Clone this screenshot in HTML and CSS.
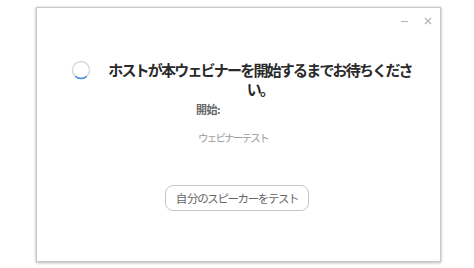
FILE: index.html
```html
<!DOCTYPE html>
<html lang="ja">
<head>
<meta charset="utf-8">
<link rel="stylesheet" href="styles.css">
</head>
<body>
<div class="window">
  <div class="titlebar">
    <span class="ctl min"></span>
    <span class="ctl close">
      <svg width="8" height="8" viewBox="0 0 8 8"><path d="M1 1L7 7M7 1L1 7" stroke="#b5b5b5" stroke-width="1.3"/></svg>
    </span>
  </div>
  <div class="heading">
    <svg class="spinner" width="20" height="20" viewBox="0 0 20 20">
      <circle cx="10" cy="10" r="8.5" fill="none" stroke="#d6d9de" stroke-width="1.5"/>
      <path d="M4.4 16.4 A8.5 8.5 0 0 0 15.6 16.4" fill="none" stroke="#4a8fdc" stroke-width="1.7"/>
    </svg>
    <h1 class="title">ホストが本ウェビナーを開始するまでお待ちくださ い。</h1>
  </div>
  <div class="info">
    <div class="label">開始:</div>
    <div class="name">ウェビナーテスト</div>
  </div>
  <div class="actions">
    <button class="btn">自&nbsp;分のスピーカーをテスト</button>
  </div>
</div>
</body>
</html>
```
FILE: styles.css
```css
html, body {
  margin: 0;
  padding: 0;
  background: #ffffff;
}
body {
  font-family: "Noto Sans CJK JP", "Noto Sans", sans-serif;
  width: 474px;
  height: 268px;
  overflow: hidden;
}
.window {
  box-sizing: border-box;
  margin: 7px 0 0 36px;
  width: 405px;
  height: 255px;
  background: #fff;
  border: 1px solid #c9c9c9;
  box-shadow: 0 1px 3px rgba(0,0,0,0.25), 0 0 1px rgba(0,0,0,0.2);
  display: flex;
  flex-direction: column;
}
.titlebar {
  display: flex;
  justify-content: flex-end;
  align-items: center;
  gap: 14px;
  height: 18px;
  padding: 0 8px 0 0;
  margin-top: 4px;
}
.ctl {
  display: flex;
  align-items: center;
  justify-content: center;
  width: 9px;
  height: 9px;
}
.min::before {
  content: "";
  display: block;
  width: 7px;
  height: 1px;
  background: #b5b5b5;
}
.heading {
  display: flex;
  align-items: flex-start;
  margin-top: 30px;
  padding-left: 34px;
}
.spinner {
  margin-top: 0;
  flex: none;
}
.title {
  margin: 0 0 0 16px;
  width: 306px;
  font-size: 15px;
  line-height: 19px;
  font-weight: 700;
  color: #2a2a2a;
  text-align: center;
  letter-spacing: -1.8px;
}
.info {
  margin-left: 159px;
  margin-top: 4px;
}
.label {
  font-size: 11px;
  line-height: 14px;
  font-weight: 700;
  color: #666;
  letter-spacing: -0.5px;
}
.name {
  margin-top: 15px;
  font-size: 10.5px;
  line-height: 14px;
  color: #9a9a9a;
  letter-spacing: -1.8px;
  padding-left: 2px;
}
.actions {
  display: flex;
  justify-content: flex-start;
  margin-top: 40px;
  padding-left: 128px;
}
.btn {
  box-sizing: border-box;
  width: 144px;
  height: 26px;
  border: 1px solid #c6c6c6;
  border-radius: 8px;
  background: #fff;
  font-family: "Noto Sans CJK JP", sans-serif;
  font-size: 11.5px;
  color: #666;
  letter-spacing: -1.4px;
  padding: 0;
}
```
